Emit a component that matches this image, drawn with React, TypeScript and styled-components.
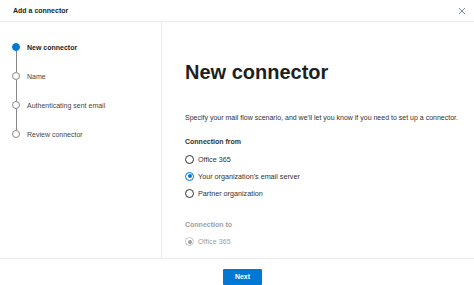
import React, { useState } from 'react';
import styled, { createGlobalStyle } from 'styled-components';

const GlobalStyle = createGlobalStyle`
  html, body {
    margin: 0;
    padding: 0;
    background: #ffffff;
  }
  body {
    font-family: "Liberation Sans", Arial, sans-serif;
    color: #323130;
  }
`;

const Panel = styled.div`
  width: 474px;
  height: 285px;
  display: flex;
  flex-direction: column;
  background: #ffffff;
  overflow: hidden;
`;

const Header = styled.div`
  height: 21px;
  display: flex;
  align-items: center;
  justify-content: space-between;
  padding: 0 8px 0 13px;
  border-bottom: 1px solid #edebe9;
`;

const HeaderTitle = styled.div`
  font-size: 7px;
  font-weight: 700;
  color: #201f1e;
`;

const CloseButton = styled.button`
  border: none;
  background: transparent;
  padding: 0;
  width: 9px;
  height: 9px;
  display: flex;
  align-items: center;
  justify-content: center;
  cursor: pointer;
`;

const Body = styled.div`
  flex: 1;
  display: flex;
  min-height: 0;
`;

const StepsPanel = styled.div`
  width: 162px;
  border-right: 1px solid #edebe9;
  padding: 21px 0 0 12px;
  box-sizing: border-box;
  display: flex;
  flex-direction: column;
`;

const StepRow = styled.div`
  display: flex;
  align-items: center;
  height: 8px;
  gap: 7px;
`;

const StepDot = styled.span<{ $active?: boolean }>`
  width: 8px;
  height: 8px;
  box-sizing: border-box;
  border-radius: 50%;
  flex-shrink: 0;
  background: ${p => (p.$active ? '#0078d4' : '#ffffff')};
  border: 1px solid ${p => (p.$active ? '#0078d4' : '#8a8886')};
`;

const StepLabel = styled.span<{ $active?: boolean }>`
  font-size: 7px;
  font-weight: ${p => (p.$active ? 700 : 400)};
  color: ${p => (p.$active ? '#201f1e' : '#484644')};
  white-space: nowrap;
`;

const StepLine = styled.div`
  width: 1px;
  height: 21px;
  margin-left: 3.5px;
  background: #8a8886;
`;

const Content = styled.div`
  flex: 1;
  padding: 38px 0 0 23px;
  display: flex;
  flex-direction: column;
`;

const Title = styled.h1`
  margin: 0;
  font-size: 20px;
  line-height: 24px;
  font-weight: 700;
  color: #201f1e;
`;

const Description = styled.p`
  margin: 29px 0 0;
  font-size: 7px;
  line-height: 10px;
  color: #323130;
`;

const GroupLabel = styled.div<{ $disabled?: boolean }>`
  margin-top: ${p => (p.$disabled ? 18 : 14)}px;
  font-size: 7px;
  line-height: 10px;
  font-weight: 700;
  color: ${p => (p.$disabled ? '#a19f9d' : '#323130')};
`;

const RadioGroup = styled.div`
  margin-top: 3.5px;
  display: flex;
  flex-direction: column;
`;

const RadioRow = styled.label<{ $disabled?: boolean }>`
  height: 17px;
  display: flex;
  align-items: center;
  gap: 4px;
  font-size: 7.2px;
  color: ${p => (p.$disabled ? '#a19f9d' : '#323130')};
  cursor: ${p => (p.$disabled ? 'default' : 'pointer')};
`;

const RadioCircle = styled.span<{ $checked?: boolean; $disabled?: boolean }>`
  width: 9px;
  height: 9px;
  box-sizing: border-box;
  border-radius: 50%;
  flex-shrink: 0;
  display: flex;
  align-items: center;
  justify-content: center;
  border: 1px solid
    ${p => (p.$disabled ? '#c8c6c4' : p.$checked ? '#0078d4' : '#323130')};

  &::after {
    content: '';
    width: 4px;
    height: 4px;
    border-radius: 50%;
    background: ${p => (p.$disabled ? '#a19f9d' : '#0078d4')};
    display: ${p => (p.$checked ? 'block' : 'none')};
  }
`;

const Footer = styled.div`
  height: 27px;
  border-top: 1px solid #edebe9;
  padding: 6px 0 0 223px;
  box-sizing: border-box;
`;

const PrimaryButton = styled.button`
  width: 39px;
  height: 16px;
  border: none;
  border-radius: 1px;
  background: #0078d4;
  color: #ffffff;
  font-family: "Liberation Sans", Arial, sans-serif;
  font-size: 7px;
  font-weight: 700;
  padding: 0;
  cursor: pointer;
`;

const steps = [
  'New connector',
  'Name',
  'Authenticating sent email',
  'Review connector',
];

const fromOptions = [
  'Office 365',
  "Your organization's email server",
  'Partner organization',
];

const App: React.FC = () => {
  const [from, setFrom] = useState(1);

  return (
    <>
      <GlobalStyle />
      <Panel>
        <Header>
          <HeaderTitle>Add a connector</HeaderTitle>
          <CloseButton aria-label="Close">
            <svg width="8" height="8" viewBox="0 0 8 8">
              <path d="M1 1 L7 7 M7 1 L1 7" stroke="#6f8aa6" strokeWidth="1" />
            </svg>
          </CloseButton>
        </Header>
        <Body>
          <StepsPanel>
            {steps.map((step, i) => (
              <React.Fragment key={step}>
                {i > 0 && <StepLine />}
                <StepRow>
                  <StepDot $active={i === 0} />
                  <StepLabel $active={i === 0}>{step}</StepLabel>
                </StepRow>
              </React.Fragment>
            ))}
          </StepsPanel>
          <Content>
            <Title>New connector</Title>
            <Description>
              Specify your mail flow scenario, and we'll let you know if you need to set up a connector.
            </Description>
            <GroupLabel>Connection from</GroupLabel>
            <RadioGroup>
              {fromOptions.map((opt, i) => (
                <RadioRow key={opt} onClick={() => setFrom(i)}>
                  <RadioCircle $checked={from === i} />
                  {opt}
                </RadioRow>
              ))}
            </RadioGroup>
            <GroupLabel $disabled>Connection to</GroupLabel>
            <RadioGroup>
              <RadioRow $disabled>
                <RadioCircle $checked $disabled />
                Office 365
              </RadioRow>
            </RadioGroup>
          </Content>
        </Body>
        <Footer>
          <PrimaryButton>Next</PrimaryButton>
        </Footer>
      </Panel>
    </>
  );
};

export default App;
